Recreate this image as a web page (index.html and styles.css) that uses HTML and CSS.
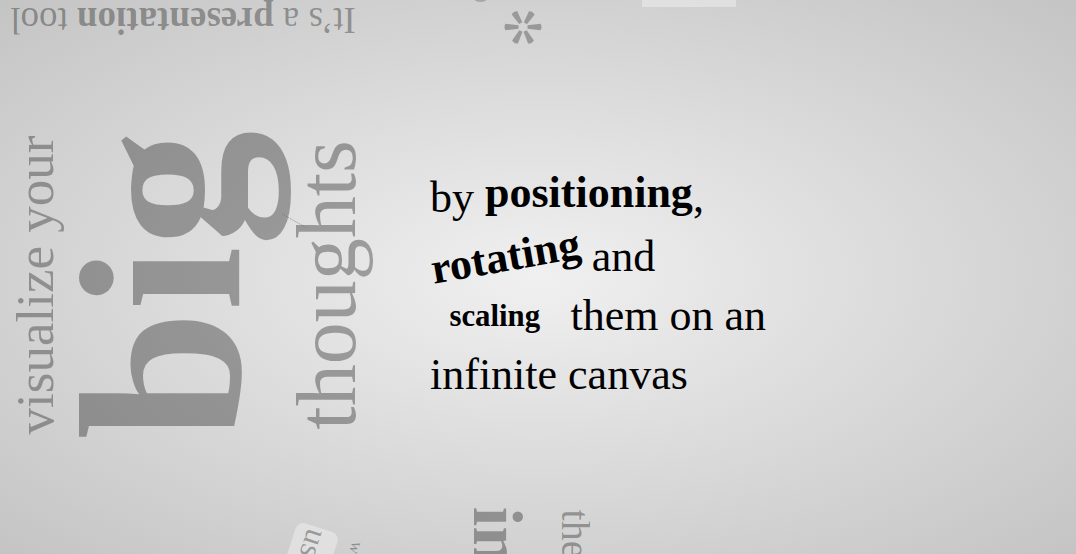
FILE: index.html
```html
<!DOCTYPE html>
<html lang="en">
<head>
<meta charset="utf-8">
<title>impress.js | presentation tool</title>
<link rel="stylesheet" href="styles.css">
</head>
<body>
<div class="stage">
  <div class="item tool">It’s a <b>presentation</b> tool</div>
  <div class="blob"></div>
  <svg class="asterisk" width="44" height="44" viewBox="-22 -22 44 44" aria-hidden="true">
    <g fill="#999">
      <path transform="rotate(0)" d="M4.5,-1.8 L17.5,-3.3 Q19.6,0 17.5,3.3 L4.5,1.8 Z"/>
      <path transform="rotate(180)" d="M4.5,-1.8 L17.5,-3.3 Q19.6,0 17.5,3.3 L4.5,1.8 Z"/>
      <path transform="rotate(-121)" d="M4.5,-1.8 L16.5,-3.3 Q18.6,0 16.5,3.3 L4.5,1.8 Z"/>
      <path transform="rotate(-58)" d="M4.5,-1.8 L16.5,-3.3 Q18.6,0 16.5,3.3 L4.5,1.8 Z"/>
      <path transform="rotate(118)" d="M4.5,-1.8 L17,-3.3 Q19.1,0 17,3.3 L4.5,1.8 Z"/>
      <path transform="rotate(62)" d="M4.5,-1.8 L17,-3.3 Q19.1,0 17,3.3 L4.5,1.8 Z"/>
    </g>
  </svg>
  <div class="slide slide-top"></div>

  <span class="item visualize">visualize your</span>
  <b class="item big">big</b>
  <span class="item thoughts">thoughts</span>
  <svg class="dots" width="30" height="20" viewBox="0 0 30 20" aria-hidden="true">
    <line x1="2" y1="3" x2="27" y2="17" stroke="#7a7a7a" stroke-width="1" stroke-dasharray="1 1.4"/>
  </svg>

  <div class="ing">
    <p>by <b class="positioning">positioning</b>,<br>
    <b class="rotating">rotating</b> and<br>
    <b class="scaling">scaling</b> them on an<br>
    infinite canvas</p>
  </div>

  <div class="slide slide-us"></div>
  <span class="item us">us</span>
  <span class="item w">w</span>
  <b class="item in">in</b>
  <span class="item the">the</span>
</div>
</body>
</html>
```

FILE: styles.css
```css
html, body {
  margin: 0;
  height: 100%;
}

body {
  overflow: hidden;
  font-family: "Liberation Serif", "Times New Roman", serif;
  background: #d7d7d7;
  background: radial-gradient(ellipse farthest-corner at 50% 50%, #f0f0f0 0%, #c4c4c4 100%);
}

.stage {
  position: relative;
  width: 1076px;
  height: 554px;
  overflow: hidden;
}

/* free-canvas items, positioned by their centre */
.item {
  position: absolute;
  white-space: nowrap;
  line-height: 1;
  color: rgba(0, 0, 0, 0.32);
}

.tool {
  left: 182.5px;
  top: 19.5px;
  font-size: 37px;
  transform: translate(-50%, -50%) rotate(180deg);
}

.blob {
  position: absolute;
  left: 474px;
  top: -5px;
  width: 13px;
  height: 7px;
  border-radius: 50%;
  background: #a8a8a8;
}

.asterisk {
  position: absolute;
  left: 501px;
  top: 5px;
}

.slide {
  position: absolute;
  background: rgba(255, 255, 255, 0.35);
}

.slide-top {
  left: 642px;
  top: -10px;
  width: 94px;
  height: 17px;
}

.visualize {
  left: 35px;
  top: 285px;
  font-size: 53px;
  transform: translate(-50%, -50%) rotate(-90deg);
}

.big {
  left: 162px;
  top: 285px;
  font-size: 232px;
  font-weight: bold;
  transform: translate(-50%, -50%) rotate(-90deg);
}

.thoughts {
  left: 327px;
  top: 285px;
  font-size: 84px;
  transform: translate(-50%, -50%) rotate(-90deg);
}

.dots {
  position: absolute;
  left: 280px;
  top: 211px;
}

.ing {
  position: absolute;
  left: 430px;
  top: 168px;
  width: 420px;
}

.ing p {
  margin: 0;
  font-size: 44px;
  line-height: 59px;
  color: #000;
}

.ing b {
  display: inline-block;
}

.positioning {
  transform: translateY(-5px);
}

.rotating {
  transform: rotate(-10deg);
}

.scaling {
  transform: scale(0.7);
}

.slide-us {
  left: 298px;
  top: 521px;
  width: 44px;
  height: 90px;
  border-radius: 8px;
  transform-origin: 0 0;
  transform: rotate(18deg);
}

.us {
  left: 314px;
  top: 544px;
  font-size: 32px;
  transform: translate(-50%, -50%) rotate(108deg);
}

.w {
  left: 356px;
  top: 548px;
  font-size: 17px;
  transform: translate(-50%, -50%) rotate(108deg);
}

.in {
  left: 497px;
  top: 536px;
  font-size: 70px;
  font-weight: bold;
  transform: translate(-50%, -50%) rotate(90deg);
}

.the {
  left: 574.5px;
  top: 534px;
  font-size: 40px;
  transform: translate(-50%, -50%) rotate(90deg);
}
```
